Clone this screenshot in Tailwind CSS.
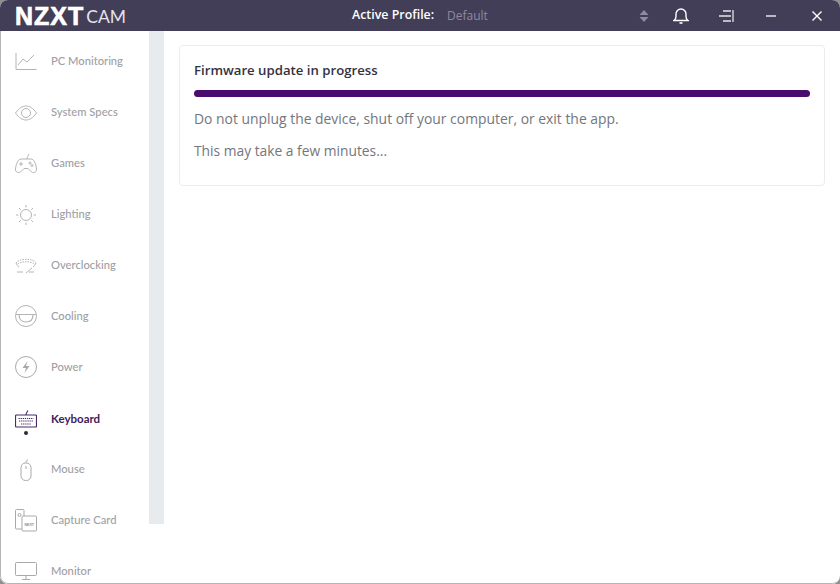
<!DOCTYPE html>
<html lang="en">
<head>
<meta charset="UTF-8" />
<title>NZXT CAM</title>
<script src="https://cdn.jsdelivr.net/npm/@tailwindcss/browser@4"></script>
</head>
<body class="w-[840px] h-[584px] overflow-hidden bg-[#8f8f8f] font-['Open_Sans',sans-serif]">
<div class="w-[840px] h-[584px] flex flex-col overflow-hidden rounded-[8px] bg-white">
	<!-- title bar -->
	<header class="h-[31px] shrink-0 flex items-center bg-[#423e58] text-white relative">
		<span class="ml-[15px] font-['Liberation_Sans',sans-serif] font-bold text-[25px] leading-[30px] tracking-[1px] [-webkit-text-stroke:0.7px_white]">NZXT</span>
		<span class="ml-[2px] mt-[3px] font-['Lato',sans-serif] text-[17.500px] leading-[30px] text-[#e4e3ea]">CAM</span>
		<div class="absolute left-[352px] top-0 h-[31px] flex items-center text-[12.400px]">
			<span class="font-semibold w-[95px]">Active Profile:</span>
			<span class="text-[#8d8a9f] text-[12px]">Default</span>
		</div>
		<div class="ml-auto flex items-center h-[31px]">
			<svg class="w-[10px] h-[14px] mr-[24px]" viewBox="0 0 10 14" fill="#8d8a9f"><path d="M5 1 9.500 6H.5zM5 13 .5 8h9z"/></svg>
			<svg class="w-[16px] h-[17px] mr-[30px]" viewBox="0 0 16 17" fill="none" stroke="#fff" stroke-width="1.400"><path d="M1 13.500c1.500-1 2-2 2-4V7a5 5 0 0 1 10 0v2.500c0 2 .5 3 2 4z"/><path d="M6.500 16h3" stroke-width="1.600"/></svg>
			<svg class="w-[15px] h-[14px] mr-[32px]" viewBox="0 0 15 14" fill="none" stroke="#e4e3ea" stroke-width="1.300"><path d="M14 1v12M4 2h8M0 7h12M4 12h8"/></svg>
			<svg class="w-[10px] h-[2px] mr-[36px]" viewBox="0 0 10 2" fill="none" stroke="#e4e3ea" stroke-width="1.500"><path d="M0 1h10"/></svg>
			<svg class="w-[10px] h-[10px] mr-[18px]" viewBox="0 0 10 10" fill="none" stroke="#fff" stroke-width="1.400"><path d="m.5.5 9 9M9.500.5l-9 9"/></svg>
		</div>
	</header>
	<div class="flex-1 flex min-h-0 border-l border-b border-[#b5b5b5] rounded-b-[8px] overflow-hidden">
		<!-- sidebar -->
		<nav class="w-[148px] shrink-0 pt-[5px] h-[600px] flex flex-col text-[11.200px] text-[#a0a0a4] font-['Lato',sans-serif] font-medium">
			<a class="h-[51px] shrink-0 flex items-center gap-[14px] pl-[14px]">
				<svg class="w-[22px] h-[17px]" viewBox="0 0 22 17" fill="none" stroke="#b4b4b8" stroke-width="1"><path d="M1 0v16.500h20.500M3 12l5-6 4 3 7-7"/></svg>
				<span>PC Monitoring</span>
			</a>
			<a class="h-[51px] shrink-0 flex items-center gap-[14px] pl-[14px]">
				<svg class="w-[22px] h-[16px]" viewBox="0 0 22 16" fill="none" stroke="#b4b4b8" stroke-width="1"><path d="M.5 8C4 3 7.500 1 11 1s7 2 10.500 7C18 13 14.500 15 11 15S4 13 .5 8z"/><circle cx="11" cy="8" r="4.500"/></svg>
				<span>System Specs</span>
			</a>
			<a class="h-[51px] shrink-0 flex items-center gap-[14px] pl-[14px]">
				<svg class="w-[22px] h-[20px]" viewBox="0 0 22 20" fill="none" stroke="#b4b4b8" stroke-width="1"><path d="M6 5h10c3 0 5 5 5.500 10 .2 3-2.500 4.500-5 3L13 14.500H9L5.500 18c-2.500 1.500-5.200 0-5-3C1 10 3 5 6 5z"/><path d="M12 5c0-2 1-3 2-5M4 10h4M6 8v4"/><circle cx="15" cy="9" r="1"/><circle cx="17" cy="11.500" r="1"/></svg>
				<span>Games</span>
			</a>
			<a class="h-[51px] shrink-0 flex items-center gap-[14px] pl-[14px]">
				<svg class="w-[22px] h-[22px]" viewBox="0 0 22 22" fill="none" stroke="#b4b4b8" stroke-width="1"><circle cx="11" cy="11" r="5.500"/><path d="M11 1v2.500M11 18.500V21M1 11h2.500M18.500 11H21M4 4l1.800 1.800M16.200 16.200 18 18M4 18l1.800-1.800M16.200 5.800 18 4"/></svg>
				<span>Lighting</span>
			</a>
			<a class="h-[51px] shrink-0 flex items-center gap-[14px] pl-[14px]">
				<svg class="w-[22px] h-[18px]" viewBox="0 0 22 18" fill="none" stroke="#b4b4b8" stroke-width="1"><path d="M1 6c3-5 17-5 20 0M3 7c3-3 13-3 16 0" stroke-dasharray="1.500 1"/><path d="M1 6c1 2 1.500 3 3 4M21 6c-1 2-1.500 3-3 4M2 15h6M11 16l6-5M14 15h5"/></svg>
				<span>Overclocking</span>
			</a>
			<a class="h-[51px] shrink-0 flex items-center gap-[14px] pl-[14px]">
				<svg class="w-[22px] h-[22px] -mt-[1px]" viewBox="0 0 22 22" fill="none" stroke="#b4b4b8" stroke-width="1"><circle cx="11" cy="11" r="10.500"/><path d="M1 9.500h20M4 9.500c0 5 3 7.500 7 7.500s7-2.500 7-7.500" stroke-width="1.200"/></svg>
				<span>Cooling</span>
			</a>
			<a class="h-[51px] shrink-0 flex items-center gap-[14px] pl-[14px]">
				<svg class="w-[22px] h-[22px] -mt-[1px]" viewBox="0 0 22 22" fill="none" stroke="#a9a9ad" stroke-width="1"><circle cx="11" cy="11" r="10.500"/><path d="M12.500 5 7.500 12H11l-1.500 5 5-7H11z" fill="#a9a9ad" stroke="none"/></svg>
				<span>Power</span>
			</a>
			<a class="h-[51px] shrink-0 flex items-center gap-[14px] pl-[14px] text-[#3f1d5c] text-[11.500px] font-bold relative">
				<svg class="w-[22px] h-[18px]" viewBox="0 0 22 18" fill="none" stroke="#4a2a68" stroke-width="1.200"><path d="M11 5c0-2 1-3 2-4.500"/><rect x=".5" y="5" width="21" height="12" rx="1"/><path d="M3.500 8.500h15M4 11h14M6 14h10" stroke-dasharray="1.300 .8"/></svg>
				<span>Keyboard</span>
				<span class="absolute left-[23px] top-[38px] w-[4px] h-[4px] rounded-full bg-[#2c2a3c]"></span>
			</a>
			<a class="h-[51px] shrink-0 flex items-center gap-[14px] pl-[14px]">
				<svg class="w-[22px] h-[22px]" viewBox="0 0 22 22" fill="none" stroke="#a9a9ad" stroke-width="1"><rect x="6" y="4" width="10" height="17.500" rx="4.500"/><path d="M11 4c0-2 .5-2.500 2-3.500M11 7v3"/></svg>
				<span>Mouse</span>
			</a>
			<a class="h-[51px] shrink-0 flex items-center gap-[14px] pl-[14px]">
				<svg class="w-[22px] h-[24px]" viewBox="0 0 22 24" fill="none" stroke="#a9a9ad" stroke-width="1"><path d="M7 20H1.500a1 1 0 0 1-1-1V1.500a1 1 0 0 1 1-1H8a1 1 0 0 1 1 1V7"/><circle cx="4.500" cy="6" r="1.500"/><rect x="7" y="7" width="14.500" height="15" rx="1"/><text x="14.200" y="16.500" text-anchor="middle" font-size="3.600" font-weight="700" fill="#8f8f94" stroke="none" font-family="Liberation Sans">NEXT</text></svg>
				<span>Capture Card</span>
			</a>
			<a class="h-[51px] shrink-0 flex items-center gap-[14px] pl-[14px]">
				<svg class="w-[22px] h-[19px]" viewBox="0 0 22 19" fill="none" stroke="#a9a9ad" stroke-width="1"><rect x=".5" y=".5" width="21" height="13" rx="1"/><path d="M11 14v3M7 17.500h8"/></svg>
				<span>Monitor</span>
			</a>
		</nav>
		<!-- scrollbar -->
		<div class="w-[15px] shrink-0 h-[493px] bg-[#e8ebee]"></div>
		<!-- content -->
		<main class="flex-1 pt-[14px] pl-[15px] pr-[15px]">
			<section class="h-[141px] rounded-[4px] border border-[#ececee] px-[14px] pt-[14px]">
				<h2 class="text-[13.200px] leading-[20px] font-semibold text-[#343242]">Firmware update in progress</h2>
				<div class="mt-[10px] h-[7px] rounded-full bg-[#4b0a6e]"></div>
				<p class="mt-[12px] text-[13.900px] leading-[20px] text-[#73767d]">Do not unplug the device, shut off your computer, or exit the app.</p>
				<p class="mt-[12px] text-[13.800px] leading-[20px] text-[#73767d]">This may take a few minutes...</p>
			</section>
		</main>
	</div>
</div>
</body>
</html>
